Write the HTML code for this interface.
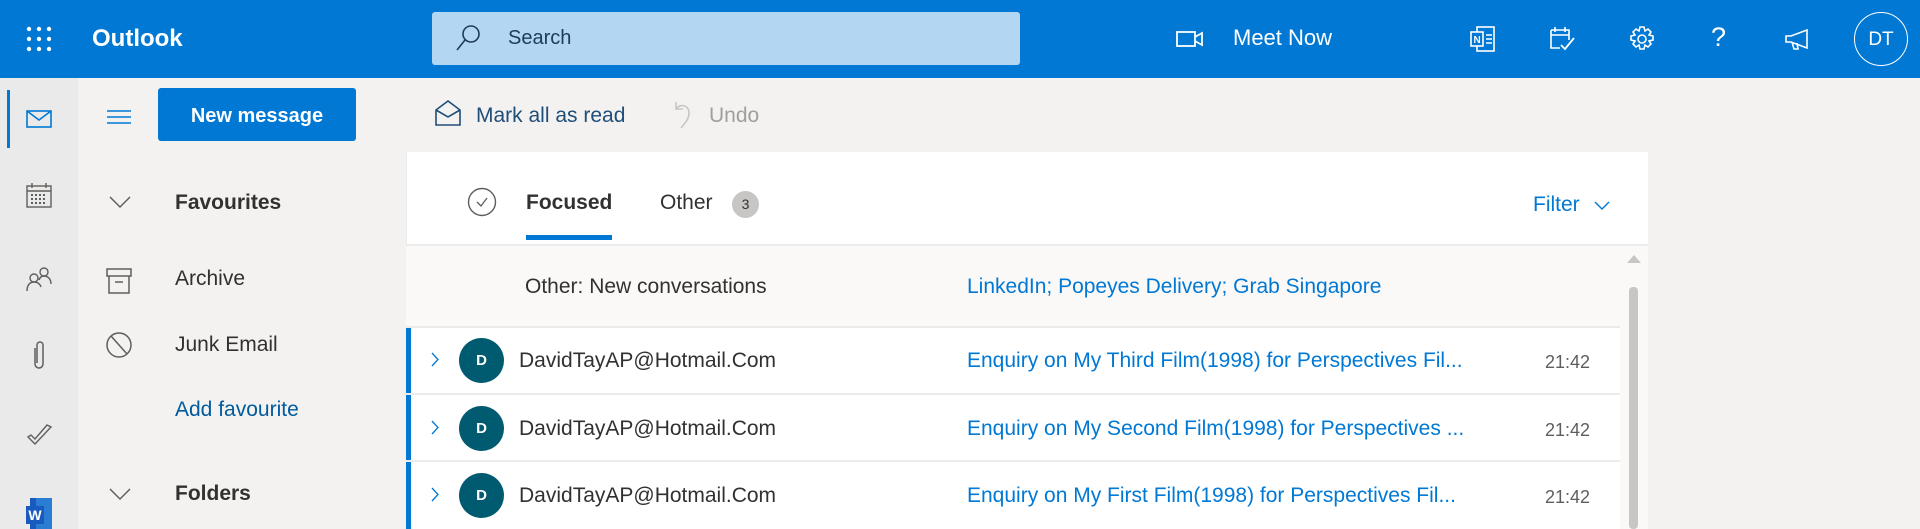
<!DOCTYPE html><html><head><meta charset="utf-8"><style>
*{margin:0;padding:0;box-sizing:border-box}
body{width:1920px;height:529px;overflow:hidden;font-family:"Liberation Sans",sans-serif;background:#f3f2f1;position:relative;color:#323130}
.a{position:absolute}
.hdr{left:0;top:0;width:1920px;height:78px;background:#0078d4}
.w{color:#fff}
svg{position:absolute;overflow:visible}
.t{white-space:nowrap;line-height:1}
</style></head><body>
<div class="a hdr"></div>
<svg style="left:27px;top:27px" width="24" height="24"><g fill="#fff"><circle cx="2" cy="2" r="2.2"/><circle cx="12" cy="2" r="2.2"/><circle cx="22" cy="2" r="2.2"/><circle cx="2" cy="12" r="2.2"/><circle cx="12" cy="12" r="2.2"/><circle cx="22" cy="12" r="2.2"/><circle cx="2" cy="22" r="2.2"/><circle cx="12" cy="22" r="2.2"/><circle cx="22" cy="22" r="2.2"/></g></svg>
<div class="a t w" style="left:92px;top:27px;font-size:24px;font-weight:bold">Outlook</div>
<div class="a" style="left:432px;top:12px;width:588px;height:53px;background:#b3d6f2;border-radius:3px"></div>
<svg style="left:455px;top:24px" width="26" height="28"><circle cx="16" cy="10" r="8" fill="none" stroke="#1f3b5a" stroke-width="1.6"/><path d="M10 16L2 26" stroke="#1f3b5a" stroke-width="1.6"/></svg>
<div class="a t" style="left:508px;top:28px;font-size:20px;color:#1f3b5a">Search</div>
<svg style="left:1176px;top:31px" width="28" height="16"><rect x="1" y="1" width="18" height="14" fill="none" stroke="#fff" stroke-width="1.8"/><path d="M19 6L26 2V14L19 10" fill="none" stroke="#fff" stroke-width="1.8"/></svg>
<div class="a t w" style="left:1233px;top:27px;font-size:22px">Meet Now</div>
<svg style="left:1470px;top:26px" width="26" height="26"><rect x="7" y="1" width="17" height="24" fill="none" stroke="#fff" stroke-width="1.6"/><rect x="1" y="6" width="12" height="14" fill="#0078d4" stroke="#fff" stroke-width="1.6"/><text x="3.5" y="17" font-size="10" fill="#fff" font-family="Liberation Sans" font-weight="bold">N</text><path d="M16 9h6M16 13h6M16 17h6" stroke="#fff" stroke-width="1.4"/></svg>
<svg style="left:1550px;top:26px" width="26" height="26"><path d="M1 4h18v10M1 4v18h9M1 9h18M5 1v5M15 1v5" fill="none" stroke="#fff" stroke-width="1.6"/><path d="M11 19l4 4 9-11" fill="none" stroke="#fff" stroke-width="1.8"/></svg>
<svg style="left:1629px;top:26px" width="26" height="26" viewBox="0 0 26 26"><g fill="none" stroke="#fff" stroke-width="1.6"><circle cx="13" cy="13" r="4"/><path d="M11 1h4l1 4 3-2 3 3-2 3 4 1v4l-4 1 2 3-3 3-3-2-1 4h-4l-1-4-3 2-3-3 2-3-4-1v-4l4-1-2-3 3-3 3 2z"/></g></svg>
<div class="a t w" style="left:1711px;top:24px;font-size:27px">?</div>
<svg style="left:1784px;top:29px" width="28" height="22"><path d="M2 7h5l16-6v18L7 13H2z M8 13l2 7h4l-1-6" fill="none" stroke="#fff" stroke-width="1.6"/></svg>
<div class="a" style="left:1854px;top:12px;width:54px;height:54px;border:1.5px solid #fff;border-radius:50%"></div>
<div class="a t w" style="left:1854px;top:30px;width:54px;text-align:center;font-size:19px">DT</div>

<div class="a" style="left:0;top:78px;width:78px;height:451px;background:#eaeaea"></div>
<div class="a" style="left:7px;top:90px;width:3px;height:58px;background:#0078d4"></div>
<svg style="left:26px;top:110px" width="26" height="18"><rect x="1" y="1" width="24" height="16" fill="none" stroke="#0078d4" stroke-width="1.6"/><path d="M1 1l12 9 12-9" fill="none" stroke="#0078d4" stroke-width="1.6"/></svg>
<svg style="left:26px;top:182px" width="26" height="26"><g fill="none" stroke="#605e5c" stroke-width="1.4"><rect x="1" y="4" width="24" height="21"/><path d="M1 9h24M6 1v5M20 1v5"/></g><g fill="#605e5c"><rect x="5" y="12" width="2" height="2"/><rect x="9" y="12" width="2" height="2"/><rect x="13" y="12" width="2" height="2"/><rect x="17" y="12" width="2" height="2"/><rect x="5" y="16" width="2" height="2"/><rect x="9" y="16" width="2" height="2"/><rect x="13" y="16" width="2" height="2"/><rect x="17" y="16" width="2" height="2"/><rect x="5" y="20" width="2" height="2"/><rect x="9" y="20" width="2" height="2"/><rect x="13" y="20" width="2" height="2"/><rect x="17" y="20" width="2" height="2"/></g></svg>
<svg style="left:26px;top:266px" width="26" height="26"><g fill="none" stroke="#605e5c" stroke-width="1.4"><circle cx="8" cy="12" r="4"/><path d="M1 25c0-6 3-9 7-9s6 2 7 5"/><circle cx="18" cy="6" r="4"/><path d="M13 14c1-3 3-4 5-4 4 0 7 3 7 8"/></g></svg>
<svg style="left:30px;top:340px" width="18" height="32"><path d="M5 8v16a4 4 0 0 0 8 0V5a3 3 0 0 0-6 0v18" fill="none" stroke="#605e5c" stroke-width="1.5"/></svg>
<svg style="left:27px;top:424px" width="26" height="22"><path d="M1 13l7 7 16-17-4-2L8 15l-4-4z" fill="none" stroke="#605e5c" stroke-width="1.4"/></svg>
<div class="a" style="left:30px;top:498px;width:22px;height:31px;background:#185abd"></div>
<div class="a" style="left:36px;top:498px;width:16px;height:31px;background:#2b7cd3"></div>
<div class="a t" style="left:26px;top:506px;width:18px;height:18px;background:#185abd;color:#fff;font-size:14px;font-weight:bold;text-align:center;padding-top:2px">W</div>

<svg style="left:107px;top:110px" width="24" height="14"><path d="M0 1h24M0 7h24M0 13h24" stroke="#0078d4" stroke-width="1.4"/></svg>
<div class="a" style="left:158px;top:88px;width:198px;height:53px;background:#0078d4;border-radius:3px"></div>
<div class="a t w" style="left:158px;top:106px;width:198px;text-align:center;font-size:20px;font-weight:bold">New message</div>
<svg style="left:435px;top:100px" width="28" height="28"><path d="M1 10L13 1l12 9v15H1z M1 10l12 7 12-7" fill="none" stroke="#1f4e79" stroke-width="1.6"/></svg>
<div class="a t" style="left:476px;top:105px;font-size:21px;color:#1f4e79">Mark all as read</div>
<svg style="left:672px;top:100px" width="20" height="30"><path d="M4 2v7h7 M4 9c4-6 13-4 13 4 0 6-4 10-8 15" fill="none" stroke="#c8c6c4" stroke-width="1.6"/></svg>
<div class="a t" style="left:709px;top:105px;font-size:21px;color:#a19f9d">Undo</div>

<svg style="left:109px;top:196px" width="22" height="12"><path d="M1 1l10 10L21 1" fill="none" stroke="#605e5c" stroke-width="1.5"/></svg>
<div class="a t" style="left:175px;top:192px;font-size:21px;font-weight:bold;color:#323130">Favourites</div>
<svg style="left:106px;top:268px" width="26" height="26"><path d="M1 1h24v7H1z M3 8v17h20V8 M9 14h8" fill="none" stroke="#605e5c" stroke-width="1.5"/></svg>
<div class="a t" style="left:175px;top:268px;font-size:21px">Archive</div>
<svg style="left:106px;top:332px" width="26" height="26"><circle cx="13" cy="13" r="12" fill="none" stroke="#605e5c" stroke-width="1.5"/><path d="M5 4l16 18" stroke="#605e5c" stroke-width="1.5"/></svg>
<div class="a t" style="left:175px;top:334px;font-size:21px">Junk Email</div>
<div class="a t" style="left:175px;top:399px;font-size:21px;color:#005a9e">Add favourite</div>
<svg style="left:109px;top:488px" width="22" height="12"><path d="M1 1l10 10L21 1" fill="none" stroke="#605e5c" stroke-width="1.5"/></svg>
<div class="a t" style="left:175px;top:483px;font-size:21px;font-weight:bold">Folders</div>

<div class="a" style="left:406px;top:152px;width:1242px;height:377px;background:#fff;border-left:1px solid #edebe9"></div>
<div class="a" style="left:406px;top:244px;width:1242px;height:2px;background:#edebe9"></div>
<svg style="left:467px;top:187px" width="30" height="30"><circle cx="15" cy="15" r="13.5" fill="none" stroke="#605e5c" stroke-width="1.4"/><path d="M10 15l4 4 6-8" fill="none" stroke="#605e5c" stroke-width="1.3"/></svg>
<div class="a t" style="left:526px;top:192px;font-size:21px;font-weight:bold;color:#323130">Focused</div>
<div class="a" style="left:526px;top:235px;width:86px;height:5px;background:#0078d4"></div>
<div class="a t" style="left:660px;top:192px;font-size:21px;color:#323130">Other</div>
<div class="a t" style="left:732px;top:191px;width:27px;height:27px;border-radius:50%;background:#c8c6c4;font-size:14px;text-align:center;padding-top:6px">3</div>
<div class="a t" style="left:1533px;top:194px;font-size:21px;color:#0078d4">Filter</div>
<svg style="left:1594px;top:201px" width="16" height="9"><path d="M1 1l7 7 7-7" fill="none" stroke="#0078d4" stroke-width="1.4"/></svg>
<div class="a" style="left:406px;top:246px;width:1222px;height:80px;background:#faf9f8"></div>
<div class="a t" style="left:525px;top:276px;font-size:21px">Other: New conversations</div>
<div class="a t" style="left:967px;top:276px;font-size:21px;color:#0078d4">LinkedIn; Popeyes Delivery; Grab Singapore</div>
<div class="a" style="left:1620px;top:246px;width:28px;height:283px;background:#faf9f8"></div>
<svg style="left:1627px;top:255px" width="14" height="8"><path d="M0 8L7 0l7 8z" fill="#c8c6c4"/></svg>
<div class="a" style="left:1629px;top:287px;width:9px;height:242px;background:#c8c6c4;border-radius:4px"></div>

<div class="a" style="left:406px;top:326px;width:1214px;height:2px;background:#edebe9"></div>
<div class="a" style="left:406px;top:393px;width:1214px;height:2px;background:#edebe9"></div>
<div class="a" style="left:406px;top:460px;width:1214px;height:2px;background:#edebe9"></div>
<div class="a" style="left:406px;top:328px;width:5px;height:65px;background:#0078d4"></div>
<div class="a" style="left:406px;top:395px;width:5px;height:65px;background:#0078d4"></div>
<div class="a" style="left:406px;top:462px;width:5px;height:67px;background:#0078d4"></div>

<svg style="left:431px;top:352px" width="8" height="15"><path d="M1 1l6 6.5L1 14" fill="none" stroke="#0078d4" stroke-width="1.3"/></svg>
<div class="a t w" style="left:459px;top:338px;width:45px;height:45px;border-radius:50%;background:#005b70;font-size:15px;font-weight:bold;text-align:center;padding-top:15px">D</div>
<div class="a t" style="left:519px;top:350px;font-size:21px">DavidTayAP@Hotmail.Com</div>
<div class="a t" style="left:967px;top:350px;font-size:21px;color:#0078d4">Enquiry on My Third Film(1998) for Perspectives Fil...</div>
<div class="a t" style="left:1545px;top:353px;font-size:18px;color:#605e5c">21:42</div>

<svg style="left:431px;top:420px" width="8" height="15"><path d="M1 1l6 6.5L1 14" fill="none" stroke="#0078d4" stroke-width="1.3"/></svg>
<div class="a t w" style="left:459px;top:406px;width:45px;height:45px;border-radius:50%;background:#005b70;font-size:15px;font-weight:bold;text-align:center;padding-top:15px">D</div>
<div class="a t" style="left:519px;top:418px;font-size:21px">DavidTayAP@Hotmail.Com</div>
<div class="a t" style="left:967px;top:418px;font-size:21px;color:#0078d4">Enquiry on My Second Film(1998) for Perspectives ...</div>
<div class="a t" style="left:1545px;top:421px;font-size:18px;color:#605e5c">21:42</div>

<svg style="left:431px;top:487px" width="8" height="15"><path d="M1 1l6 6.5L1 14" fill="none" stroke="#0078d4" stroke-width="1.3"/></svg>
<div class="a t w" style="left:459px;top:473px;width:45px;height:45px;border-radius:50%;background:#005b70;font-size:15px;font-weight:bold;text-align:center;padding-top:15px">D</div>
<div class="a t" style="left:519px;top:485px;font-size:21px">DavidTayAP@Hotmail.Com</div>
<div class="a t" style="left:967px;top:485px;font-size:21px;color:#0078d4">Enquiry on My First Film(1998) for Perspectives Fil...</div>
<div class="a t" style="left:1545px;top:488px;font-size:18px;color:#605e5c">21:42</div>
</body></html>
